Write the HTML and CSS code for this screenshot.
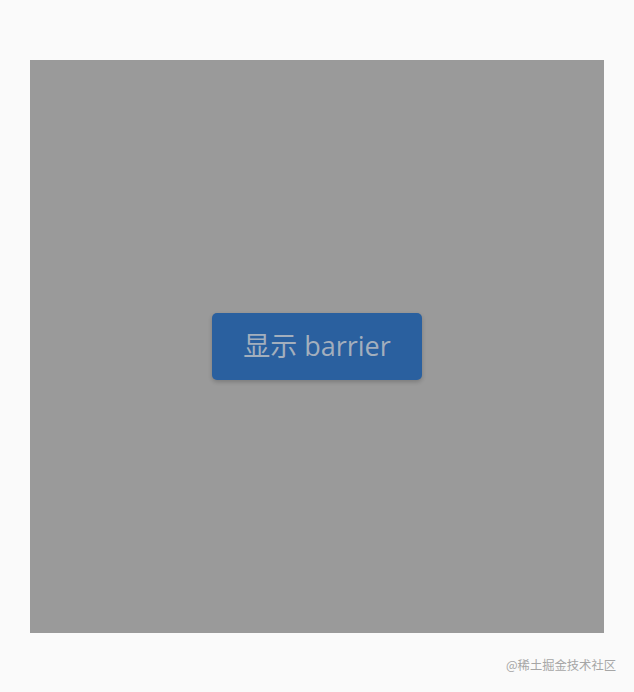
FILE: index.html
```html
<!DOCTYPE html>
<html lang="zh">
<head>
<meta charset="utf-8">
<link rel="stylesheet" href="styles.css">
</head>
<body>
<div class="page">
  <div class="stage">
    <button class="btn">显示 barrier</button>
  </div>
  <div class="footer">
    <span class="mark">@稀土掘金技术社区</span>
  </div>
</div>
</body>
</html>
```

FILE: styles.css
```css
html, body {
  margin: 0;
  padding: 0;
  background: #fafafa;
}
.page {
  width: 634px;
  height: 692px;
  padding: 60px 30px 0 30px;
  box-sizing: border-box;
}
.stage {
  width: 574px;
  height: 573px;
  background: #9a9a9a;
  display: flex;
  align-items: center;
  justify-content: center;
}
.btn {
  width: 210px;
  height: 67px;
  border: none;
  border-radius: 5px;
  background: #2a609f;
  color: #a3afbd;
  font-family: "Open Sans", "Noto Sans CJK SC", sans-serif;
  font-size: 27px;
  line-height: 30px;
  padding: 0 0 2px 0;
  box-shadow: 0 2px 4px rgba(0,0,0,0.2);
}
.footer {
  display: flex;
  justify-content: flex-end;
  padding-top: 23px;
  margin-right: -12px;
}
.mark {
  font-family: "Noto Sans CJK SC", sans-serif;
  font-size: 12.3px;
  line-height: 18px;
  color: #a6a6a6;
}
```
